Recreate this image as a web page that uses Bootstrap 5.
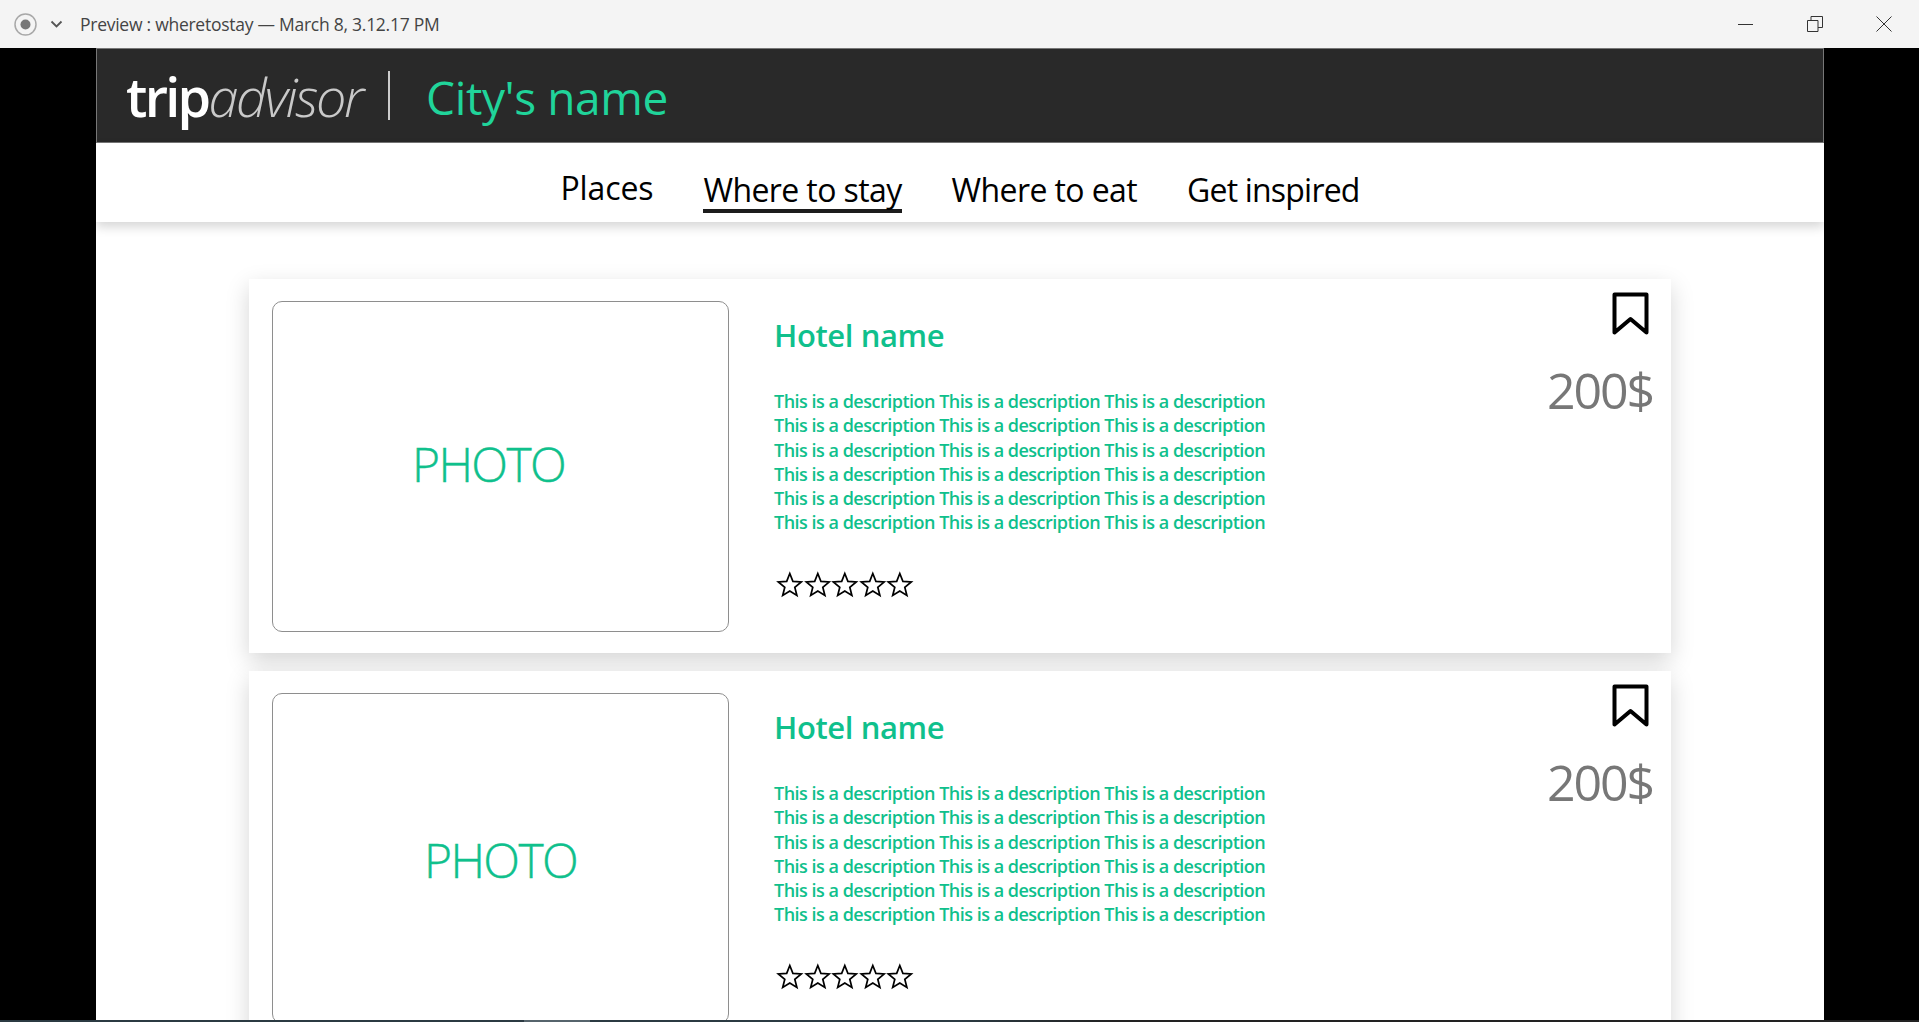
<!DOCTYPE html>
<html lang="en">
<head>
  <meta charset="UTF-8">
  <title>Preview : wheretostay</title>
  <link href="https://cdn.jsdelivr.net/npm/bootstrap@5.3.0/dist/css/bootstrap.min.css" rel="stylesheet">
  <style>
    html, body { height: 100%; }
    body {
      font-family: "Open Sans", "Noto Sans", sans-serif;
      background: #000;
      overflow: hidden;
    }
    .win-bar { height: 48px; background: #f4f4f4; color: #444; font-size: 17.5px; letter-spacing: -.26px; flex: none; }
    .rec-dot { width: 23px; height: 23px; margin-left: 14px; }
    .chev { width: 13px; height: 8px; margin-left: 13px; margin-right: 17px; }
    .win-btns { margin-left: auto; margin-right: 27px; gap: 53px; }
    .win-btns svg { width: 16px; height: 16px; display: block; }
    .stage { flex: 1 1 auto; min-height: 0; }
    .sheet { width: 1728px; margin-left: 96px; background: #fff; overflow: hidden; }
    .top-head { height: 95px; background: #292929; border: 1px solid #777; padding-left: 29px; }
    .logo-trip { color: #fff; font-size: 54px; font-weight: 600; letter-spacing: -2.7px; line-height: 1; }
    .logo-adv { color: #c9c9c9; font-size: 54px; font-weight: 300; font-style: italic; letter-spacing: -2.4px; line-height: 1; }
    .logo-sep { width: 2px; height: 49px; background: #ccc; margin: 0 36px 0 26px; }
    .city { color: #20d49a; font-size: 46px; letter-spacing: -.4px; line-height: 1; padding-top: 2px; }
    .tabs { height: 79px; background: #fff; box-shadow: 0 5px 10px rgba(0, 0, 0, .16); position: relative; z-index: 2; gap: 50px; padding-top: 26px; }
    .tabs a { color: #000; font-size: 32px; letter-spacing: -.6px; line-height: 42px; height: 43px; text-decoration: none; display: block; }
    .tabs a.active { border-bottom: 4px solid #1c1c1c; height: 44px; }
    .tabs a.first { margin-top: -2px; letter-spacing: -.1px; }
    .tabs a.last { letter-spacing: -.8px; }
    .hotels { padding: 57px 153px 0; gap: 18px; }
    .hotel { border: 0; border-radius: 0; height: 374px; flex: none; box-shadow: 0 8px 22px rgba(0, 0, 0, .17); flex-direction: row; }
    .photo-box { width: 457px; height: 331px; margin: 22px 45px 0 23px; border: 1px solid #8e8e8e; border-radius: 10px; color: #0fc08c; font-size: 48px; font-weight: 300; letter-spacing: -1.6px; -webkit-text-stroke: .4px #0fc08c; flex: none; }
    .photo-box.off { padding: 0 24px 5px 0; }
    .photo-box.low { padding-top: 3px; }
    .hotel-body { flex: 1 1 auto; padding-top: 35px; }
    .hotel-name { color: #0fc08c; font-size: 31px; font-weight: 600; letter-spacing: -.4px; line-height: 42px; margin: 0 0 33px; }
    .hotel-desc { color: #0fc08c; font-size: 18px; font-weight: 600; letter-spacing: -.5px; line-height: 24.3px; width: 510px; margin: 0 0 36px; }
    .stars { gap: 0; margin-left: 2px; }
    .stars svg { width: 27.6px; height: 27px; display: block; }
    .hotel-side { padding: 13px 18px 0 0; flex: none; }
    .bm { width: 37px; height: 43px; margin-right: 4px; display: block; }
    .price { color: #777; font-size: 50px; letter-spacing: -2.1px; line-height: 68px; margin-top: 21px; }
    .task-strip { height: 2px; background: linear-gradient(90deg, #2b3a42 0, #2b3a42 50%, #222 58%, #222 100%); flex: none; }
    .task-item { width: 66px; height: 2px; margin-left: 524px; background: #56646c; }
  </style>
</head>
<body class="d-flex flex-column">

  <div class="win-bar d-flex align-items-center">
    <svg class="rec-dot" viewBox="0 0 23 23"><circle cx="11.500" cy="11.500" r="10.500" fill="#f4f4f4" stroke="#a8a8a8" stroke-width="1.500"/><circle cx="11.500" cy="11.500" r="5" fill="#777"/></svg>
    <svg class="chev" viewBox="0 0 13 8"><path d="M1.500 1.500 6.500 6.500l5-5" fill="none" stroke="#555" stroke-width="1.800"/></svg>
    <span>Preview : wheretostay — March 8, 3.12.17 PM</span>
    <div class="win-btns d-flex align-items-center">
      <svg viewBox="0 0 16 16"><path d="M0 8.500h15" stroke="#333" fill="none"/></svg>
      <svg viewBox="0 0 16 16"><path d="M.5 4.500h10.500v11H.5zM4 4.500V.5h11.500v11H11" stroke="#333" fill="none"/></svg>
      <svg viewBox="0 0 16 16"><path d="M.5.5l15 15M15.500.5l-15 15" stroke="#333" fill="none"/></svg>
    </div>
  </div>

  <div class="stage d-flex overflow-hidden">
    <div class="sheet">
      <header class="top-head d-flex align-items-center">
        <span class="logo-trip">trip</span><span class="logo-adv">advisor</span>
        <span class="logo-sep"></span>
        <span class="city">City's name</span>
      </header>

      <nav class="tabs d-flex justify-content-center">
        <a class="first" href="#">Places</a>
        <a class="active" href="#">Where to stay</a>
        <a href="#">Where to eat</a>
        <a class="last" href="#">Get inspired</a>
      </nav>

      <div class="hotels d-flex flex-column">
        <div class="card hotel">
          <div class="photo-box off d-flex align-items-center justify-content-center">PHOTO</div>
          <div class="hotel-body">
            <h2 class="hotel-name">Hotel name</h2>
            <p class="hotel-desc">This is a description This is a description This is a description This is a description This is a description This is a description This is a description This is a description This is a description This is a description This is a description This is a description This is a description This is a description This is a description This is a description This is a description This is a description</p>
            <div class="stars d-flex">
              <svg viewBox="0 0 27 27"><path d="M13.500 2.500l3.100 7.900 8.400.5-6.500 5.400 2.100 8.200-7.100-4.500-7.100 4.500 2.100-8.200L2 10.900l8.400-.5z" fill="#fff" stroke="#000" stroke-width="1.700"/></svg>
              <svg viewBox="0 0 27 27"><path d="M13.500 2.500l3.100 7.900 8.400.5-6.500 5.400 2.100 8.200-7.100-4.500-7.100 4.500 2.100-8.200L2 10.900l8.400-.5z" fill="#fff" stroke="#000" stroke-width="1.700"/></svg>
              <svg viewBox="0 0 27 27"><path d="M13.500 2.500l3.100 7.900 8.400.5-6.500 5.400 2.100 8.200-7.100-4.500-7.100 4.500 2.100-8.200L2 10.900l8.400-.5z" fill="#fff" stroke="#000" stroke-width="1.700"/></svg>
              <svg viewBox="0 0 27 27"><path d="M13.500 2.500l3.100 7.900 8.400.5-6.500 5.400 2.100 8.200-7.100-4.500-7.100 4.500 2.100-8.200L2 10.900l8.400-.5z" fill="#fff" stroke="#000" stroke-width="1.700"/></svg>
              <svg viewBox="0 0 27 27"><path d="M13.500 2.500l3.100 7.900 8.400.5-6.500 5.400 2.100 8.200-7.100-4.500-7.100 4.500 2.100-8.200L2 10.900l8.400-.5z" fill="#fff" stroke="#000" stroke-width="1.700"/></svg>
            </div>
          </div>
          <div class="hotel-side d-flex flex-column align-items-end">
            <svg class="bm" viewBox="0 0 37 43"><path d="M2.500 2.500h32v38L18.500 27l-16 13.500z" fill="none" stroke="#000" stroke-width="4" stroke-linejoin="round"/></svg>
            <div class="price">200$</div>
          </div>
        </div>

        <div class="card hotel">
          <div class="photo-box low d-flex align-items-center justify-content-center">PHOTO</div>
          <div class="hotel-body">
            <h2 class="hotel-name">Hotel name</h2>
            <p class="hotel-desc">This is a description This is a description This is a description This is a description This is a description This is a description This is a description This is a description This is a description This is a description This is a description This is a description This is a description This is a description This is a description This is a description This is a description This is a description</p>
            <div class="stars d-flex">
              <svg viewBox="0 0 27 27"><path d="M13.500 2.500l3.100 7.900 8.400.5-6.500 5.400 2.100 8.200-7.100-4.500-7.100 4.500 2.100-8.200L2 10.900l8.400-.5z" fill="#fff" stroke="#000" stroke-width="1.700"/></svg>
              <svg viewBox="0 0 27 27"><path d="M13.500 2.500l3.100 7.900 8.400.5-6.500 5.400 2.100 8.200-7.100-4.500-7.100 4.500 2.100-8.200L2 10.900l8.400-.5z" fill="#fff" stroke="#000" stroke-width="1.700"/></svg>
              <svg viewBox="0 0 27 27"><path d="M13.500 2.500l3.100 7.900 8.400.5-6.500 5.400 2.100 8.200-7.100-4.500-7.100 4.500 2.100-8.200L2 10.900l8.400-.5z" fill="#fff" stroke="#000" stroke-width="1.700"/></svg>
              <svg viewBox="0 0 27 27"><path d="M13.500 2.500l3.100 7.900 8.400.5-6.500 5.400 2.100 8.200-7.100-4.500-7.100 4.500 2.100-8.200L2 10.900l8.400-.5z" fill="#fff" stroke="#000" stroke-width="1.700"/></svg>
              <svg viewBox="0 0 27 27"><path d="M13.500 2.500l3.100 7.900 8.400.5-6.500 5.400 2.100 8.200-7.100-4.500-7.100 4.500 2.100-8.200L2 10.900l8.400-.5z" fill="#fff" stroke="#000" stroke-width="1.700"/></svg>
            </div>
          </div>
          <div class="hotel-side d-flex flex-column align-items-end">
            <svg class="bm" viewBox="0 0 37 43"><path d="M2.500 2.500h32v38L18.500 27l-16 13.500z" fill="none" stroke="#000" stroke-width="4" stroke-linejoin="round"/></svg>
            <div class="price">200$</div>
          </div>
        </div>
      </div>
    </div>
  </div>

  <div class="task-strip"><div class="task-item"></div></div>

  <script src="https://cdn.jsdelivr.net/npm/bootstrap@5.3.0/dist/js/bootstrap.bundle.min.js"></script>
</body>
</html>
